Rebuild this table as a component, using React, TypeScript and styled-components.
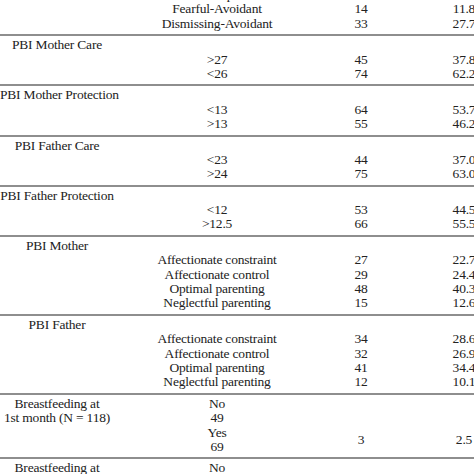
import React from "react";
import styled, { createGlobalStyle } from "styled-components";

interface Group {
  label: string;
  rows: [string, string, string][];
}

const GlobalStyle = createGlobalStyle`
  html, body {
    margin: 0;
    padding: 0;
    background: #fff;
    overflow: hidden;
  }
`;

const Page = styled.div`
    width: 474px;
    height: 474px;
    overflow: hidden;
    background: #fff;
  `,
  Table = styled.div`
    width: 526px;
    margin-top: -14px;
    font-family: "Liberation Serif", "Times New Roman", serif;
    font-size: 13.5px;
    letter-spacing: -0.2px;
    color: #222;
  `,
  Section = styled.div<{ $last?: boolean }>`
    display: grid;
    grid-template-columns: 114px 206px 82px 124px;
    grid-auto-rows: 14.4px;
    padding: 2px 0 3px;
    border-bottom: ${({ $last }) => ($last ? "none" : "2px solid #8e8e8e")};
  `,
  Cell = styled.div`
    text-align: center;
    line-height: 14.4px;
    white-space: nowrap;
  `,
  Spanned = styled(Cell)<{ $col: number; $row: number; $span: number }>`
    grid-column: ${({ $col }) => $col};
    grid-row: ${({ $row, $span }) => `${$row} / span ${$span}`};
    align-self: center;
  `;

const groups: Group[] = [
  {
    label: "PBI Mother Care",
    rows: [
      [">27", "45", "37.8"],
      ["<26", "74", "62.2"],
    ],
  },
  {
    label: "PBI Mother Protection",
    rows: [
      ["<13", "64", "53.7"],
      [">13", "55", "46.2"],
    ],
  },
  {
    label: "PBI Father Care",
    rows: [
      ["<23", "44", "37.0"],
      [">24", "75", "63.0"],
    ],
  },
  {
    label: "PBI Father Protection",
    rows: [
      ["<12", "53", "44.5"],
      [">12.5", "66", "55.5"],
    ],
  },
  {
    label: "PBI Mother",
    rows: [
      ["Affectionate constraint", "27", "22.7"],
      ["Affectionate control", "29", "24.4"],
      ["Optimal parenting", "48", "40.3"],
      ["Neglectful parenting", "15", "12.6"],
    ],
  },
  {
    label: "PBI Father",
    rows: [
      ["Affectionate constraint", "34", "28.6"],
      ["Affectionate control", "32", "26.9"],
      ["Optimal parenting", "41", "34.4"],
      ["Neglectful parenting", "12", "10.1"],
    ],
  },
];

const attachment: [string, string, string][] = [
  ["Preoccupied", "", ""],
  ["Fearful-Avoidant", "14", "11.8"],
  ["Dismissing-Avoidant", "33", "27.7"],
];

const Row: React.FC<{ cells: string[] }> = ({ cells }) => (
  <>
    {cells.map((c, i) => (
      <Cell key={i}>{c}</Cell>
    ))}
  </>
);

const App: React.FC = () => (
  <Page>
    <GlobalStyle />
    <Table>
      <Section>
        {attachment.map((r) => (
          <Row key={r[0]} cells={["", ...r]} />
        ))}
      </Section>

      {groups.map((g) => (
        <Section key={g.label}>
          <Row cells={[g.label, "", "", ""]} />
          {g.rows.map((r) => (
            <Row key={r[0]} cells={["", ...r]} />
          ))}
        </Section>
      ))}

      <Section>
        <Spanned $col={1} $row={1} $span={2}>
          Breastfeeding at
          <br />
          1st month (N = 118)
        </Spanned>
        <Spanned $col={2} $row={1} $span={1}>No</Spanned>
        <Spanned $col={2} $row={2} $span={1}>49</Spanned>
        <Spanned $col={2} $row={3} $span={1}>Yes</Spanned>
        <Spanned $col={2} $row={4} $span={1}>69</Spanned>
        <Spanned $col={3} $row={3} $span={2}>3</Spanned>
        <Spanned $col={4} $row={3} $span={2}>2.5</Spanned>
      </Section>

      <Section $last>
        <Cell>Breastfeeding at</Cell>
        <Cell>No</Cell>
      </Section>
    </Table>
  </Page>
);

export default App;
